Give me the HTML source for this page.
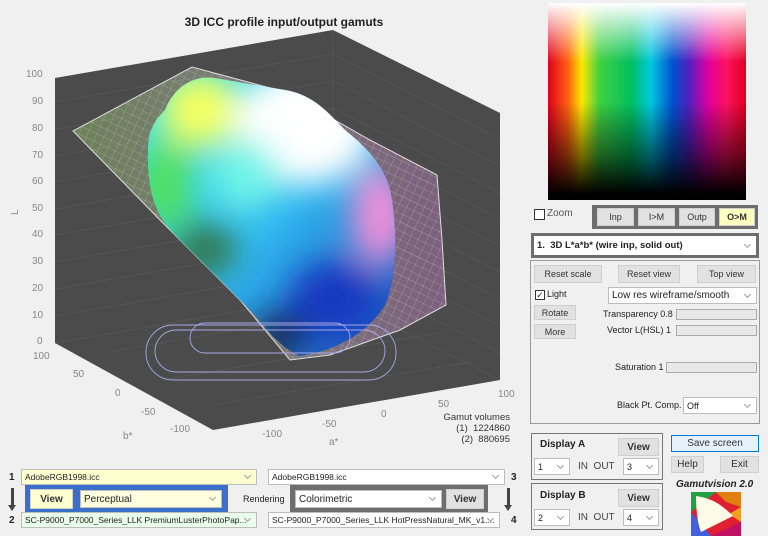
<!DOCTYPE html>
<html><head><meta charset="utf-8"><style>
*{box-sizing:border-box;margin:0;padding:0}
body{width:768px;height:536px;background:#f0f0f0;font-family:"Liberation Sans",sans-serif;font-size:9px;color:#222;position:relative;overflow:hidden}
.a{position:absolute}
.btn{position:absolute;background:#e1e1e1;border:1px solid #cfcfcf;display:flex;align-items:center;justify-content:center;font-size:9px;color:#333}
.dd{position:absolute;background:#fff;border:1px solid #bdbdbd;font-size:9px;display:flex;align-items:center;padding-left:3px;white-space:nowrap;overflow:hidden}
.dd:after{content:"";position:absolute;right:6px;top:50%;width:4px;height:4px;margin-top:-4px;border-right:1px solid #999;border-bottom:1px solid #999;transform:rotate(45deg)}
.tick{position:absolute;color:#888;font-size:10px}
.arr{position:absolute;width:3px;height:18px;background:#444}
.arr:after{content:"";position:absolute;left:-3px;bottom:-5px;border-left:4.5px solid transparent;border-right:4.5px solid transparent;border-top:6px solid #444}
</style></head><body>
<svg class="a" style="left:0;top:0" width="528" height="460">
<defs>
<clipPath id="blob"><path d="M165,110 C175,85 195,75 215,78 L285,90 C315,95 330,115 345,130 C370,150 388,170 392,200 C398,240 396,280 385,305 C370,330 340,350 300,356 C285,350 270,335 255,315 C230,290 200,260 175,235 C155,215 147,190 148,150 C148,130 155,120 165,110 Z"/></clipPath>
<filter id="bl" x="-50%" y="-50%" width="200%" height="200%"><feGaussianBlur stdDeviation="16"/></filter>
<linearGradient id="base" x1="0" y1="0" x2="1" y2="1"><stop offset="0" stop-color="#40f0e0"/><stop offset="0.5" stop-color="#30b8f0"/><stop offset="1" stop-color="#1838b0"/></linearGradient>
<linearGradient id="wire" x1="0" y1="0" x2="1" y2="0"><stop offset="0" stop-color="#c0ff80"/><stop offset="0.5" stop-color="#e8e8e8"/><stop offset="1" stop-color="#f090f0"/></linearGradient>
<pattern id="grid" width="8" height="8" patternUnits="userSpaceOnUse" patternTransform="rotate(25)"><path d="M0,0H8M0,0V8" stroke="#e8e8e8" stroke-width="0.5" fill="none" opacity="0.6"/></pattern>
</defs>
<polygon points="55,78 333,30 500,113 500,380 213,430 55,343" fill="#4b4b4b"/>
<g stroke="#5e5e5e" stroke-width="0.6" fill="none">
<path d="M55,343 L333,295 L500,380 M333,30 L333,295"/>
<path d="M55,316 L333,268 M55,289 L333,241 M55,262 L333,214 M55,235 L333,187 M55,209 L333,161 M55,182 L333,134 M55,156 L333,108 M55,129 L333,81 M55,102 L333,54"/>
<path d="M333,268 L500,353 M333,241 L500,326 M333,214 L500,299 M333,187 L500,272 M333,161 L500,246 M333,134 L500,219 M333,108 L500,193 M333,81 L500,166 M333,54 L500,139"/>
<path d="M108,352 L383,305 M163,380 L438,333 M213,405 L470,362"/>
</g>
<polygon points="73,131 192,67 285,92 370,140 437,175 442,240 446,305 400,330 330,355 290,360 240,300 160,220" fill="url(#wire)" opacity="0.3"/>
<polygon points="73,131 192,67 285,92 370,140 437,175 442,240 446,305 400,330 330,355 290,360 240,300 160,220" fill="url(#grid)" stroke="#ddd" stroke-width="1"/>
<g clip-path="url(#blob)">
<rect x="140" y="70" width="270" height="300" fill="url(#base)"/>
<g filter="url(#bl)">
<ellipse cx="200" cy="110" rx="40" ry="38" fill="#f4ff60"/>
<ellipse cx="165" cy="185" rx="28" ry="45" fill="#50e060"/>
<ellipse cx="305" cy="125" rx="70" ry="60" fill="#ffffff"/>
<ellipse cx="380" cy="215" rx="28" ry="50" fill="#f090d8"/>
<ellipse cx="205" cy="250" rx="32" ry="28" fill="#307850"/>
<ellipse cx="335" cy="300" rx="45" ry="38" fill="#1838c0"/>
<ellipse cx="280" cy="335" rx="28" ry="22" fill="#182848"/>
<ellipse cx="245" cy="175" rx="35" ry="35" fill="#70f4e8"/>
</g></g>
<g fill="none" stroke="#a8a8e8" stroke-width="0.9">
<rect x="146" y="325" width="250" height="55" rx="27"/>
<rect x="155" y="330" width="230" height="42" rx="21"/>
<rect x="190" y="323" width="160" height="30" rx="15"/>
</g>
<text x="284" y="26" text-anchor="middle" font-family="Liberation Sans" font-weight="bold" font-size="12" fill="#222">3D ICC profile input/output gamuts</text>
<text x="18" y="215" font-size="10" fill="#888" transform="rotate(-90 18 215)" font-family="Liberation Sans">L</text>
</svg>
<div class="tick" style="left:26px;top:69px">100</div>
<div class="tick" style="left:32px;top:96px">90</div>
<div class="tick" style="left:32px;top:123px">80</div>
<div class="tick" style="left:32px;top:150px">70</div>
<div class="tick" style="left:32px;top:176px">60</div>
<div class="tick" style="left:32px;top:203px">50</div>
<div class="tick" style="left:32px;top:229px">40</div>
<div class="tick" style="left:32px;top:256px">30</div>
<div class="tick" style="left:32px;top:283px">20</div>
<div class="tick" style="left:32px;top:310px">10</div>
<div class="tick" style="left:37px;top:336px">0</div>
<div class="tick" style="left:33px;top:351px">100</div>
<div class="tick" style="left:73px;top:369px">50</div>
<div class="tick" style="left:115px;top:388px">0</div>
<div class="tick" style="left:141px;top:407px">-50</div>
<div class="tick" style="left:170px;top:424px">-100</div>
<div class="tick" style="left:123px;top:431px">b*</div>
<div class="tick" style="left:262px;top:429px">-100</div>
<div class="tick" style="left:322px;top:419px">-50</div>
<div class="tick" style="left:381px;top:409px">0</div>
<div class="tick" style="left:438px;top:399px">50</div>
<div class="tick" style="left:498px;top:389px">100</div>
<div class="tick" style="left:329px;top:437px">a*</div>
<div class="a" style="left:430px;top:412px;width:80px;text-align:right;font-size:9.5px;color:#333;line-height:11px">Gamut volumes<br>(1)&nbsp; 1224860<br>(2)&nbsp; 880695</div>

<!-- color picker -->
<div class="a" style="left:548px;top:3px;width:198px;height:197px;background:linear-gradient(to right,#e00020 0%,#ff6010 10%,#ffe800 17%,#40d040 26%,#00c060 42%,#00c8e0 52%,#0050d0 63%,#5020c0 71%,#e000a0 81%,#ff1060 90%,#e00020 100%)"></div>
<div class="a" style="left:548px;top:3px;width:198px;height:197px;background:linear-gradient(to bottom,#fff 0%,rgba(255,255,255,.6) 12%,rgba(255,255,255,0) 30%,rgba(0,0,0,0) 50%,rgba(0,0,0,.55) 78%,#000 97%)"></div>

<div class="a" style="left:534px;top:209px;width:11px;height:11px;border:1px solid #333;background:#fff"></div>
<div class="a" style="left:547px;top:208px;font-size:10px;color:#555">Zoom</div>
<div class="a" style="left:592px;top:205px;width:166px;height:24px;background:#6d6d6d"></div>
<div class="btn" style="left:597px;top:208px;width:37px;height:18px">Inp</div>
<div class="btn" style="left:638px;top:208px;width:37px;height:18px">I&gt;M</div>
<div class="btn" style="left:679px;top:208px;width:36px;height:18px">Outp</div>
<div class="btn" style="left:719px;top:208px;width:36px;height:18px;background:#ffffc0;font-weight:bold">O&gt;M</div>
<div class="a" style="left:531px;top:233px;width:228px;height:25px;background:#6d6d6d"></div>
<div class="dd" style="left:534px;top:236px;width:222px;height:19px;font-weight:bold;font-size:9.5px;border:none">1.&nbsp; 3D L*a*b* (wire inp, solid out)</div>
<div class="a" style="left:530px;top:260px;width:230px;height:164px;border:1px solid #9a9a9a"></div>
<div class="btn" style="left:534px;top:265px;width:68px;height:18px">Reset scale</div>
<div class="btn" style="left:618px;top:265px;width:62px;height:18px">Reset view</div>
<div class="btn" style="left:697px;top:265px;width:59px;height:18px">Top view</div>
<div class="a" style="left:535px;top:290px;width:10px;height:10px;border:1px solid #333;background:#fff;font-size:9px;line-height:8px;text-align:center">✓</div>
<div class="a" style="left:547px;top:289px;font-size:9px">Light</div>
<div class="dd" style="left:608px;top:287px;width:149px;height:17px;font-size:10px">Low res wireframe/smooth</div>
<div class="btn" style="left:534px;top:305px;width:42px;height:15px">Rotate</div>
<div class="btn" style="left:534px;top:324px;width:42px;height:15px">More</div>
<div class="a" style="left:603px;top:309px;font-size:9px">Transparency 0.8</div>
<div class="a" style="left:607px;top:325px;font-size:9px">Vector L(HSL) 1</div>
<div class="a" style="left:615px;top:362px;font-size:9px">Saturation 1</div>
<div class="a" style="left:617px;top:400px;font-size:9px">Black Pt. Comp.</div>
<div class="a" style="left:676px;top:309px;width:81px;height:11px;border:1px solid #aaa;background:#e8e8e8"></div>
<div class="a" style="left:676px;top:325px;width:81px;height:11px;border:1px solid #aaa;background:#e8e8e8"></div>
<div class="a" style="left:666px;top:362px;width:91px;height:11px;border:1px solid #aaa;background:#e8e8e8"></div>
<div class="dd" style="left:683px;top:397px;width:74px;height:17px">Off</div>

<div class="a" style="left:531px;top:433px;width:132px;height:47px;border:1px solid #777"></div>
<div class="a" style="left:531px;top:483px;width:132px;height:47px;border:1px solid #777"></div>
<div class="a" style="left:540px;top:439px;font-weight:bold;font-size:10px">Display A</div>
<div class="a" style="left:540px;top:490px;font-weight:bold;font-size:10px">Display B</div>
<div class="btn" style="left:618px;top:438px;width:41px;height:18px;font-weight:bold;font-size:10px">View</div>
<div class="btn" style="left:618px;top:489px;width:41px;height:18px;font-weight:bold;font-size:10px">View</div>
<div class="dd" style="left:534px;top:458px;width:36px;height:17px">1</div>
<div class="dd" style="left:534px;top:509px;width:36px;height:17px">2</div>
<div class="dd" style="left:623px;top:458px;width:36px;height:17px">3</div>
<div class="dd" style="left:623px;top:509px;width:36px;height:17px">4</div>
<div class="a" style="left:578px;top:461px;font-size:10px;color:#444">IN&nbsp; OUT</div>
<div class="a" style="left:578px;top:512px;font-size:10px;color:#444">IN&nbsp; OUT</div>
<div class="btn" style="left:671px;top:435px;width:88px;height:17px;background:#e5f1fb;border-color:#0078d7;font-size:10px">Save screen</div>
<div class="btn" style="left:671px;top:456px;width:33px;height:17px;font-size:10px">Help</div>
<div class="btn" style="left:720px;top:456px;width:39px;height:17px;font-size:10px">Exit</div>
<div class="a" style="left:676px;top:479px;font-weight:bold;font-style:italic;font-size:10px">Gamutvision 2.0</div>
<svg class="a" style="left:691px;top:492px" width="50" height="44"><rect width="50" height="44" fill="#e02030"/><polygon points="0,0 25,0 0,20" fill="#20a040"/><polygon points="25,0 50,0 50,15 35,10" fill="#e08010"/><polygon points="50,15 50,30 38,22" fill="#f0a020"/><polygon points="0,20 0,44 20,44" fill="#4060e0"/><polygon points="20,44 50,44 50,30" fill="#c01060"/><path d="M5,4 C20,6 30,12 42,24 L10,40 C6,30 5,15 5,4Z" fill="#fffbe8"/></svg>

<!-- bottom -->
<div class="a" style="left:9px;top:472px;font-weight:bold;font-size:10px">1</div>
<div class="a" style="left:9px;top:515px;font-weight:bold;font-size:10px">2</div>
<div class="a" style="left:511px;top:472px;font-weight:bold;font-size:10px">3</div>
<div class="a" style="left:511px;top:515px;font-weight:bold;font-size:10px">4</div>
<div class="arr" style="left:11px;top:488px"></div>
<div class="arr" style="left:507px;top:488px"></div>
<div class="dd" style="left:21px;top:469px;width:236px;height:16px;background:#ffffd0;font-size:8.5px">AdobeRGB1998.icc</div>
<div class="dd" style="left:268px;top:469px;width:237px;height:16px;font-size:8.5px">AdobeRGB1998.icc</div>
<div class="a" style="left:25px;top:485px;width:203px;height:27px;background:#3c70c8"></div>
<div class="btn" style="left:30px;top:489px;width:43px;height:20px;background:#ffffd0;font-weight:bold;font-size:10px">View</div>
<div class="dd" style="left:80px;top:490px;width:142px;height:18px;background:#ffffe0;font-size:10px">Perceptual</div>
<div class="a" style="left:243px;top:494px;font-size:9px">Rendering</div>
<div class="a" style="left:290px;top:485px;width:198px;height:27px;background:#6e6e6e"></div>
<div class="dd" style="left:295px;top:490px;width:147px;height:18px;font-size:10px">Colorimetric</div>
<div class="btn" style="left:446px;top:489px;width:38px;height:20px;font-weight:bold;font-size:10px">View</div>
<div class="dd" style="left:21px;top:512px;width:236px;height:16px;background:#eaffea;font-size:8.5px">SC-P9000_P7000_Series_LLK PremiumLusterPhotoPap...</div>
<div class="dd" style="left:268px;top:512px;width:232px;height:16px;font-size:8.5px">SC-P9000_P7000_Series_LLK HotPressNatural_MK_v1....</div>
</body></html>
